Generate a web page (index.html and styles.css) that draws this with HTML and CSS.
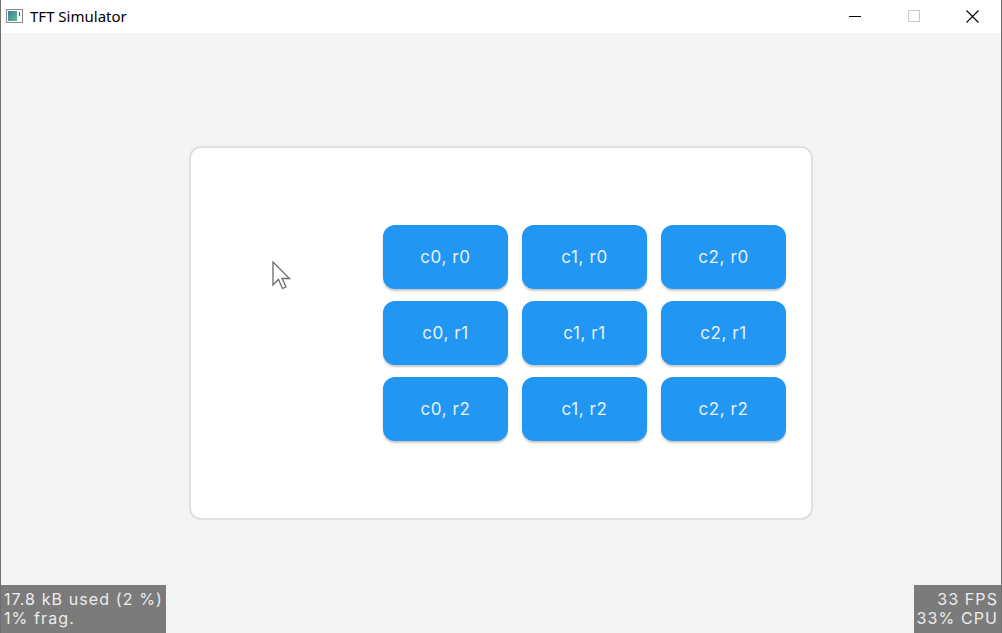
FILE: index.html
```html
<!DOCTYPE html>
<html>
<head>
<meta charset="utf-8">
<link rel="stylesheet" href="styles.css">
</head>
<body>
<div class="window">
  <div class="titlebar">
    <div class="title-left">
      <svg class="app-icon" width="17" height="14" viewBox="0 0 17 14">
        <defs>
          <linearGradient id="g" x1="0" y1="0" x2="1" y2="1">
            <stop offset="0" stop-color="#3a7fa0"/>
            <stop offset="1" stop-color="#5fbf8a"/>
          </linearGradient>
        </defs>
        <rect x="0.5" y="0.5" width="16" height="13" fill="#fff" stroke="#8a8a8a"/>
        <rect x="2" y="2" width="9" height="10" fill="url(#g)"/>
        <rect x="13" y="3" width="1" height="4" fill="#3a5a6a"/>
      </svg>
      <span class="title-text">TFT Simulator</span>
    </div>
    <div class="controls">
      <div class="ctl">
        <svg width="12" height="12" viewBox="0 0 12 12"><line x1="0" y1="6.5" x2="12" y2="6.5" stroke="#000" stroke-width="1"/></svg>
      </div>
      <div class="ctl">
        <svg width="12" height="12" viewBox="0 0 12 12"><rect x="0.5" y="0.5" width="11" height="11" fill="none" stroke="#c8c8c8" stroke-width="1"/></svg>
      </div>
      <div class="ctl">
        <svg width="13" height="13" viewBox="0 0 13 13"><path d="M0.5 0.5 L12.5 12.5 M12.5 0.5 L0.5 12.5" stroke="#000" stroke-width="1.1"/></svg>
      </div>
    </div>
  </div>
  <div class="screen">
    <div class="card">
      <div class="grid">
        <div class="btn">c0, r0</div>
        <div class="btn">c1, r0</div>
        <div class="btn">c2, r0</div>
        <div class="btn">c0, r1</div>
        <div class="btn">c1, r1</div>
        <div class="btn">c2, r1</div>
        <div class="btn">c0, r2</div>
        <div class="btn">c1, r2</div>
        <div class="btn">c2, r2</div>
      </div>
    </div>
    <svg class="cursor" width="20" height="30" viewBox="0 0 20 30">
      <path d="M1 1 L1 24 L6.5 18.5 L10.5 27.5 L14 26 L10 17.5 L17.5 17.5 Z" fill="#fff" stroke="#6a6a6a" stroke-width="1.3" stroke-linejoin="miter"/>
    </svg>
    <div class="mon mon-left">17.8 kB used (2 %)<br>1% frag.</div>
    <div class="mon mon-right">33 FPS<br>33% CPU</div>
  </div>
</div>
</body>
</html>
```
FILE: styles.css
```css
html, body {
  margin: 0;
  padding: 0;
  background: #fff;
}
.window {
  width: 1002px;
  height: 633px;
  box-sizing: border-box;
  border-left: 1px solid #6f6f6f;
  border-right: 1px solid #6f6f6f;
  display: flex;
  flex-direction: column;
  overflow: hidden;
}
.titlebar {
  height: 33px;
  background: #fff;
  display: flex;
  align-items: center;
  justify-content: space-between;
  flex: none;
}
.title-left {
  display: flex;
  align-items: center;
  padding-left: 5px;
  gap: 7px;
}
.app-icon {
  display: block;
  margin-top: -1px;
}
.title-text {
  font-family: "Noto Sans", "Liberation Sans", sans-serif;
  font-size: 15px;
  color: #000;
  margin-top: -1px;
}
.controls {
  display: flex;
  height: 33px;
}
.ctl {
  width: 58px;
  height: 33px;
  display: flex;
  align-items: center;
  justify-content: center;
}
.ctl:first-child svg { margin-left: -3px; }
.ctl svg { display: block; margin-top: -1px; }
.screen {
  position: relative;
  height: 600px;
  background: #f4f4f4;
  display: flex;
  align-items: center;
  justify-content: center;
}
.card {
  width: 624px;
  height: 374px;
  box-sizing: border-box;
  border: 2px solid #e0e0e0;
  border-radius: 12px;
  background: #fff;
  display: flex;
  align-items: center;
  padding-left: 192px;
}
.grid {
  display: grid;
  grid-template-columns: repeat(3, 125px);
  grid-auto-rows: 64px;
  column-gap: 14px;
  row-gap: 12px;
}
.btn {
  background: #2196f3;
  border-radius: 12px;
  box-shadow: 0 2px 2px rgba(0,0,0,0.22);
  color: #e8f2fc;
  font-family: "Inter", "Noto Sans", sans-serif;
  font-size: 17px;
  letter-spacing: 0.6px;
  display: flex;
  align-items: center;
  justify-content: center;
}
.cursor {
  position: absolute;
  left: 271px;
  top: 228px;
}
.mon {
  position: absolute;
  bottom: 0;
  background: #7b7b7b;
  color: #ececec;
  font-family: "Inter", "Noto Sans", sans-serif;
  font-size: 16px;
  line-height: 19px;
  padding: 5px 3px 5px 3px;
  letter-spacing: 1.1px;
}
.mon-left {
  left: 0;
}
.mon-right {
  right: 0;
  text-align: right;
}
```
